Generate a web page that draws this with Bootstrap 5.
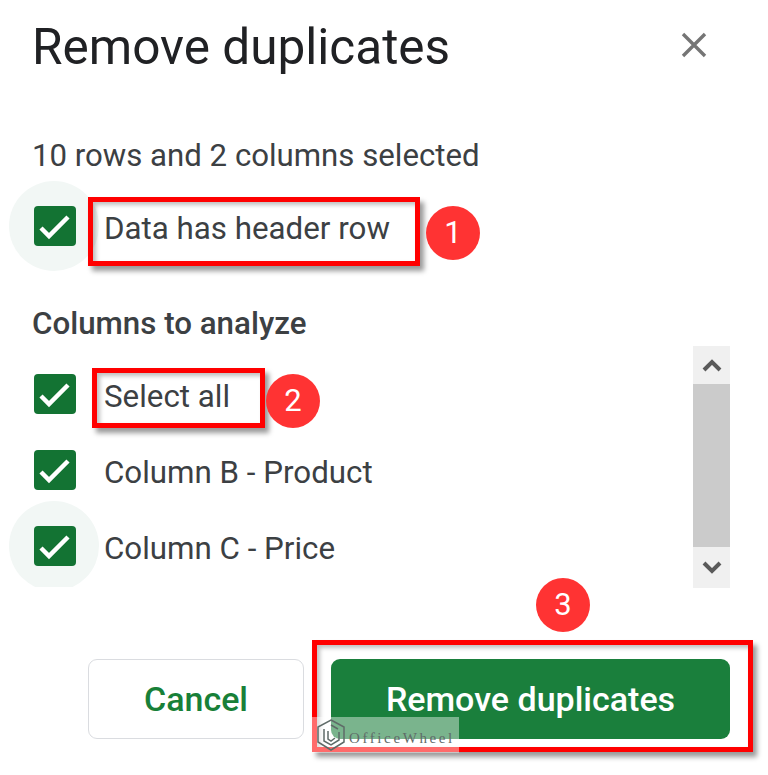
<!DOCTYPE html>
<html lang="en">
<head>
  <meta charset="UTF-8">
  <meta name="viewport" content="width=device-width, initial-scale=1.0">
  <title>Remove duplicates</title>
  <link href="https://cdn.jsdelivr.net/npm/bootstrap@5.3.0/dist/css/bootstrap.min.css" rel="stylesheet">
  <style>
    body { background: #fff; font-family: Roboto, "Liberation Sans", sans-serif; color: #3c4043; overflow: hidden; }
    .dlg { position: relative; width: 768px; height: 775px; padding: 16px 38px 0 32px; }
    .dlg-title { font-size: 49.5px; line-height: 62px; font-weight: 400; color: #202124; margin: 0; }
    .dlg-close { width: 28px; height: 28px; margin: 15px 22px 0 0; background: none; border: 0; padding: 0; }
    .dlg-sub { font-size: 31.2px; line-height: 40px; margin-top: 58px; }
    .check-row { height: 76px; font-size: 31.3px; padding-left: 2px; gap: 28px; position: relative; }
    .check-label { margin-top: 6px; }
    .check-box { width: 42px; height: 40px; border-radius: 4px; background: #137333; flex: none; position: relative; }
    .check-box svg { display: block; }
    .halo::before { content: ""; position: absolute; left: -25px; top: -25px; width: 90px; height: 90px; border-radius: 50%; background: #f2f7f5; z-index: -1; }
    .halo-cut::before { clip-path: inset(0 0 4px 0); }
    .dlg-head { font-size: 31.3px; line-height: 38px; font-weight: 500; margin-top: 41px; margin-bottom: 3px; }
    .check-list { margin-top: 10px; }
    .scroll-track { width: 37px; height: 242px; background: #f0f0f0; }
    .scroll-btn { height: 38px; }
    .scroll-btn-end { height: 41px; }
    .scroll-thumb { height: 163px; background: #cbcbcb; }
    .dlg-actions { margin-top: 71px; margin-left: 56px; gap: 27px; }
    .btn-cancel, .btn-go { height: 80px; border-radius: 9px; font-size: 34px; font-weight: 500; padding: 0; }
    .btn-cancel { width: 216px; background: #fff; border: 1.5px solid #dadce0; color: #188038; }
    .btn-go { width: 399px; background: #1a7f3c; border: 0; color: #fff; }
    .red-box { position: absolute; border: 5px solid #ff0000; box-shadow: 4px 5px 5px rgba(0,0,0,.4), inset 3px 3px 4px rgba(0,0,0,.25); pointer-events: none; }
    .num-dot { position: absolute; width: 54px; height: 54px; border-radius: 50%; background: #ff3333; color: #fff; font-size: 31px; }
    .wmark { position: absolute; left: 311px; top: 717px; width: 148px; height: 36px; background: rgba(255,255,255,.42); gap: 3px; padding-left: 3px; }
    .wmark-text { font-family: "Liberation Serif", serif; font-size: 15px; letter-spacing: 2.6px; color: #5f6b68; margin-top: 6px; }
  </style>
</head>
<body>
  <div class="dlg">
    <div class="d-flex justify-content-between align-items-start">
      <h1 class="dlg-title">Remove duplicates</h1>
      <button class="dlg-close" aria-label="Close">
        <svg width="28" height="28" viewBox="0 0 28 28"><path d="M3 3 25 25M25 3 3 25" stroke="#757575" stroke-width="3.4" fill="none"/></svg>
      </button>
    </div>

    <div class="dlg-sub">10 rows and 2 columns selected</div>

    <div class="check-row d-flex align-items-center" style="margin-top:12px">
      <span class="check-box halo">
        <svg width="42" height="40" viewBox="0 0 42 40"><path d="M7 22 15 30 34 11" stroke="#fff" stroke-width="4.5" fill="none"/></svg>
      </span>
      <span class="check-label">Data has header row</span>
    </div>

    <div class="dlg-head">Columns to analyze</div>

    <div class="d-flex justify-content-between">
      <div class="flex-grow-1 check-list">
        <div class="check-row d-flex align-items-center">
          <span class="check-box"><svg width="42" height="40" viewBox="0 0 42 40"><path d="M7 22 15 30 34 11" stroke="#fff" stroke-width="4.5" fill="none"/></svg></span>
          <span class="check-label">Select all</span>
        </div>
        <div class="check-row d-flex align-items-center">
          <span class="check-box"><svg width="42" height="40" viewBox="0 0 42 40"><path d="M7 22 15 30 34 11" stroke="#fff" stroke-width="4.5" fill="none"/></svg></span>
          <span class="check-label">Column B - Product</span>
        </div>
        <div class="check-row d-flex align-items-center">
          <span class="check-box halo halo-cut"><svg width="42" height="40" viewBox="0 0 42 40"><path d="M7 22 15 30 34 11" stroke="#fff" stroke-width="4.5" fill="none"/></svg></span>
          <span class="check-label">Column C - Price</span>
        </div>
      </div>
      <div class="scroll-track">
        <div class="scroll-btn d-flex align-items-center justify-content-center">
          <svg width="20" height="14" viewBox="0 0 20 14"><path d="M2 12 10 4 18 12" stroke="#5a5a5a" stroke-width="4" fill="none"/></svg>
        </div>
        <div class="scroll-thumb"></div>
        <div class="scroll-btn-end d-flex align-items-center justify-content-center">
          <svg width="20" height="14" viewBox="0 0 20 14"><path d="M2 2 10 10 18 2" stroke="#5a5a5a" stroke-width="4" fill="none"/></svg>
        </div>
      </div>
    </div>

    <div class="dlg-actions d-flex">
      <button class="btn btn-cancel">Cancel</button>
      <button class="btn btn-go">Remove duplicates</button>
    </div>

    <!-- callouts over the dialog -->
    <div class="red-box" style="left:88px;top:197px;width:332px;height:69px"></div>
    <div class="red-box" style="left:92px;top:368px;width:173px;height:60px"></div>
    <div class="red-box" style="left:312px;top:640px;width:441px;height:112px"></div>
    <div class="num-dot d-flex align-items-center justify-content-center" style="left:426px;top:206px">1</div>
    <div class="num-dot d-flex align-items-center justify-content-center" style="left:266px;top:374px">2</div>
    <div class="num-dot d-flex align-items-center justify-content-center" style="left:536px;top:578px">3</div>

    <div class="wmark d-flex align-items-center">
      <svg width="32" height="36" viewBox="0 0 32 36"><path d="M17 3 30 10V25L17 33 4 25V10ZM10 12V24L17 28 25 23V15M17 8 24 12M14 14V22L17 24 21 21" stroke="#5f6b68" stroke-width="1.5" fill="none"/></svg>
      <span class="wmark-text">OfficeWheel</span>
    </div>
  </div>
  <script src="https://cdn.jsdelivr.net/npm/bootstrap@5.3.0/dist/js/bootstrap.bundle.min.js"></script>
</body>
</html>
